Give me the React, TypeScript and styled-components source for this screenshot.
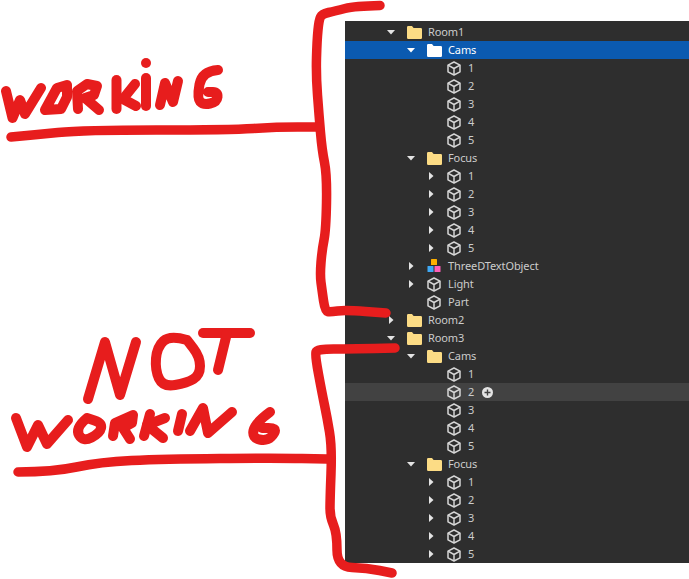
import styled, { createGlobalStyle } from "styled-components";

const GlobalStyle = createGlobalStyle`
  html, body {
    margin: 0;
    padding: 0;
    background: #fff;
  }
`;

const Page = styled.div`
  position: relative;
  width: 689px;
  height: 579px;
  padding: 21px 0 0 345px;
  box-sizing: border-box;
  overflow: hidden;
  background: #fff;
`;

const Panel = styled.div`
  width: 344px;
  height: 542px;
  padding-top: 2px;
  box-sizing: border-box;
  background: #2e2e2e;
`;

const rowBg = { none: "transparent", selected: "#0b5ab0", hover: "#424242" };

const Row = styled.div<{ $depth: number; $state: keyof typeof rowBg }>`
  display: flex;
  align-items: center;
  height: 18px;
  padding-left: ${(p) => 38 + p.$depth * 20}px;
  background: ${(p) => rowBg[p.$state]};
  color: ${(p) => (p.$state === "selected" ? "#fff" : "#cccccc")};
  font-family: "Noto Sans", sans-serif;
  font-size: 11px;
  line-height: 18px;
  letter-spacing: -0.1px;
`;

const ArrowSlot = styled.span`
  display: flex;
  align-items: center;
  justify-content: center;
  width: 16px;
  height: 18px;
  margin-right: 7px;
`;

const IconSlot = styled.span`
  display: flex;
  align-items: center;
  justify-content: center;
  width: 16px;
  height: 18px;
  margin-right: 6px;
`;

const AddButton = styled.svg`
  margin-left: 8px;
`;

const Ink = styled.svg`
  position: absolute;
  top: 0;
  left: 0;
  pointer-events: none;
`;

function Arrow({ dir, color }: { dir: "down" | "right"; color: string }) {
  return (
    <svg width="10" height="10" viewBox="0 0 10 10">
      <path d={dir === "down" ? "M1 3 H9 L5 7.5 Z" : "M3 1 V9 L7.5 5 Z"} fill={color} />
    </svg>
  );
}

function Folder({ color }: { color: string }) {
  return (
    <svg width="15" height="13" viewBox="0 0 15 13">
      <path d="M0 1.2 Q0 0 1.2 0 H5 L6.6 2 H13.8 Q15 2 15 3.2 V11.8 Q15 13 13.8 13 H1.2 Q0 13 0 11.8 Z" fill={color} />
    </svg>
  );
}

function Cube() {
  return (
    <svg width="14" height="15" viewBox="0 0 14 15" fill="none" stroke="#d6d6d6" strokeWidth="1.5" strokeLinejoin="round">
      <path d="M7 1 L13 4.2 V10.8 L7 14 L1 10.8 V4.2 Z" />
      <path d="M1 4.2 L7 7.5 L13 4.2 M7 7.5 V14" />
    </svg>
  );
}

function TextObject() {
  return (
    <svg width="14" height="14" viewBox="0 0 14 14">
      <rect x="4" y="0" width="6" height="6" rx="0.5" fill="#ffb000" />
      <rect x="0.5" y="7" width="6" height="6" rx="0.5" fill="#3fa9f5" />
      <rect x="7.5" y="7" width="6" height="6" rx="0.5" fill="#ff5fb8" />
    </svg>
  );
}

type Node = {
  depth: number;
  label: string;
  icon: "folder" | "cube" | "text";
  arrow?: "down" | "right";
  state?: keyof typeof rowBg;
  add?: boolean;
};

const numbered = (arrow: "right" | undefined, hoverOn?: string): Node[] =>
  ["1", "2", "3", "4", "5"].map((label) => ({
    depth: 2,
    label,
    icon: "cube",
    arrow,
    state: label === hoverOn ? "hover" : "none",
    add: label === hoverOn,
  }));

const rows: Node[] = [
  { depth: 0, label: "Room1", icon: "folder", arrow: "down" },
  { depth: 1, label: "Cams", icon: "folder", arrow: "down", state: "selected" },
  ...numbered(undefined),
  { depth: 1, label: "Focus", icon: "folder", arrow: "down" },
  ...numbered("right"),
  { depth: 1, label: "ThreeDTextObject", icon: "text", arrow: "right" },
  { depth: 1, label: "Light", icon: "cube", arrow: "right" },
  { depth: 1, label: "Part", icon: "cube" },
  { depth: 0, label: "Room2", icon: "folder", arrow: "right" },
  { depth: 0, label: "Room3", icon: "folder", arrow: "down" },
  { depth: 1, label: "Cams", icon: "folder", arrow: "down" },
  ...numbered(undefined, "2"),
  { depth: 1, label: "Focus", icon: "folder", arrow: "down" },
  ...numbered("right"),
];

type Pt = [number, number];

// freehand lines: midpoints as curve ends, so they stay soft
function soft(pts: Pt[]) {
  let d = `M${pts[0][0]} ${pts[0][1]}`;
  for (let i = 1; i < pts.length - 1; i++) {
    const mx = (pts[i][0] + pts[i + 1][0]) / 2;
    const my = (pts[i][1] + pts[i + 1][1]) / 2;
    d += ` Q${pts[i][0]} ${pts[i][1]} ${mx} ${my}`;
  }
  const last = pts[pts.length - 1];
  return `${d} L${last[0]} ${last[1]}`;
}

function hard(pts: Pt[]) {
  return "M" + pts.map((p) => p.join(" ")).join(" L");
}

const lines: Pt[][] = [
  [[380, 5.5], [355, 6], [335, 11], [322, 14], [319, 20], [317, 40], [316, 75], [319, 115], [322, 150], [327, 175], [326, 230], [322, 250], [320, 275], [322, 290], [325, 311], [330, 312], [345, 310], [386, 313]],
  [[11, 137], [33, 135], [83, 130], [230, 130], [277, 127], [318, 127]],
  [[395, 348], [350, 349], [317, 349], [315, 355], [322, 393], [327, 417], [332, 447], [330, 500], [330, 517], [337, 533], [337, 567], [367, 568], [392, 573]],
  [[18, 472], [53, 472], [100, 462], [163, 459], [277, 458], [327, 459]],
];

const letters: Pt[][] = [
  // WORKING, top
  [[6, 91], [12.5, 118], [20, 100], [25, 114], [41, 88]],
  [[45, 110], [57, 88], [67, 85], [67, 97], [61, 109], [45, 110]],
  [[78, 109], [77, 91], [87, 84], [97, 86], [94, 95], [85, 98], [99, 110]],
  [[116.5, 80], [116.5, 109]],
  [[135, 84], [123, 99], [136, 106]],
  [[146, 78], [146, 106]],
  [[160, 105], [165, 83], [173, 102], [178, 81]],
  // NOT
  [[88, 399], [105, 342], [120, 395], [136, 342]],
  [[203, 333], [250, 333]],
  [[227, 333], [218, 370]],
  // WORKING, bottom
  [[16, 418], [27, 447], [38, 425], [47, 444], [68, 420]],
  [[113, 436], [115, 423], [133, 415], [132, 423], [123, 428], [130, 439]],
  [[150, 414], [144, 436]],
  [[165, 418], [147, 425], [163, 438]],
  [[182, 414], [178, 431]],
  [[190, 431], [203, 408], [208, 433], [232, 412]],
];

const rounds: Pt[][] = [
  [[218, 70], [202, 71], [197, 98], [203, 105], [217, 102], [218, 92], [208, 92]],
  [[187, 340], [170, 335], [157, 347], [155, 370], [163, 387], [187, 383], [200, 375], [200, 357], [187, 340]],
  [[87, 418], [75, 428], [83, 442], [100, 433], [102, 423], [87, 418]],
  [[270, 412], [255, 423], [252, 438], [267, 441], [275, 433], [275, 428], [262, 428]],
];

export default function App() {
  return (
    <Page>
      <GlobalStyle />
      <Panel>
        {rows.map((r, i) => {
          const white = r.state === "selected";
          return (
            <Row key={i} $depth={r.depth} $state={r.state ?? "none"}>
              <ArrowSlot>{r.arrow && <Arrow dir={r.arrow} color={white ? "#fff" : "#e4e4e4"} />}</ArrowSlot>
              <IconSlot>
                {r.icon === "folder" && <Folder color={white ? "#fff" : "#fcdc85"} />}
                {r.icon === "cube" && <Cube />}
                {r.icon === "text" && <TextObject />}
              </IconSlot>
              {r.label}
              {r.add && (
                <AddButton width="11" height="11" viewBox="0 0 11 11">
                  <circle cx="5.5" cy="5.5" r="5.5" fill="#e4e4e4" />
                  <path d="M5.5 2.5 V8.5 M2.5 5.5 H8.5" stroke="#424242" strokeWidth="1.4" />
                </AddButton>
              )}
            </Row>
          );
        })}
      </Panel>
      <Ink width="689" height="579" viewBox="0 0 689 579" fill="none" stroke="#e71d1d" strokeLinecap="round" strokeLinejoin="round">
        <g strokeWidth="9.5">
          {lines.map((l, i) => (
            <path key={i} d={soft(l)} />
          ))}
        </g>
        <g strokeWidth="10">
          {letters.map((l, i) => (
            <path key={i} d={hard(l)} />
          ))}
          {rounds.map((l, i) => (
            <path key={i} d={soft(l)} />
          ))}
        </g>
        <circle cx="146" cy="63" r="5" fill="#e71d1d" stroke="none" />
      </Ink>
    </Page>
  );
}
